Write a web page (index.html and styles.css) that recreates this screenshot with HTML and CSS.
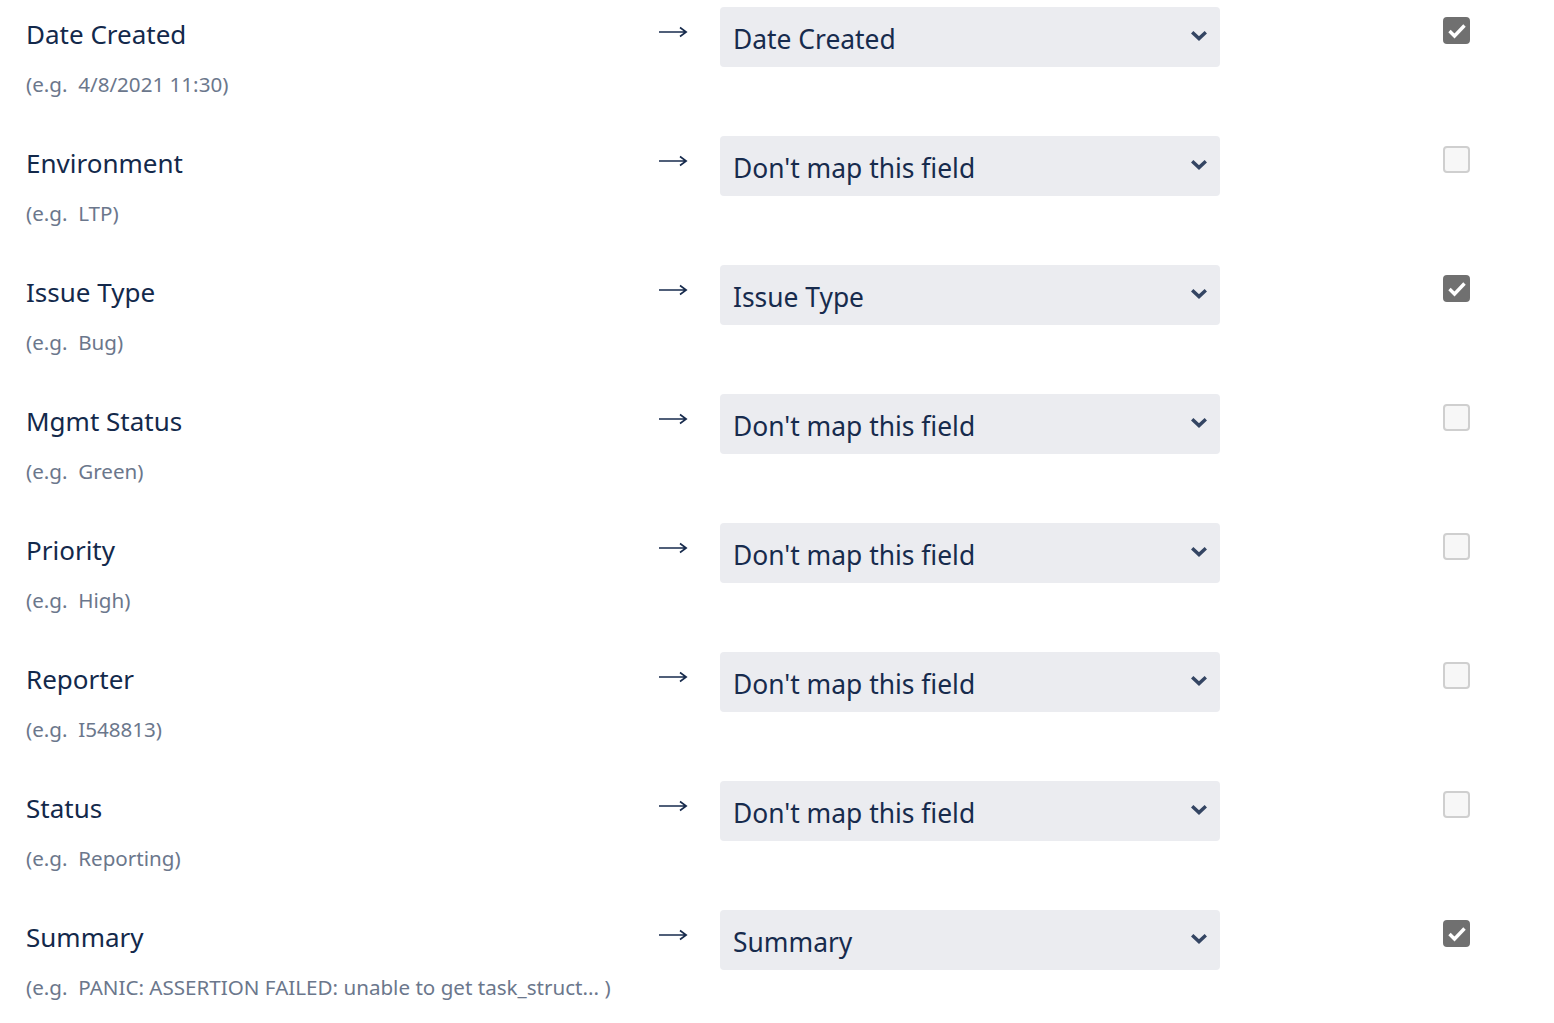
FILE: index.html
```html
<!DOCTYPE html>
<html>
<head>
<meta charset="utf-8">
<link rel="stylesheet" href="styles.css">
</head>
<body>
<div class="mapping">
  <div class="row">
    <div class="source"><div class="name">Date Created</div><div class="example">(e.g.&nbsp; 4/8/2021 11:30)</div></div>
    <div class="arrow"><svg width="30" height="14" viewBox="0 0 30 14"><path d="M1 7H28M22 2.5L28.2 7L22 11.5" fill="none" stroke="#172b4d" stroke-width="1.6"/></svg></div>
    <div class="select"><span>Date Created</span><svg class="chev" width="18" height="11" viewBox="0 0 18 11"><path d="M2.2 2.2L9 8.6L15.8 2.2" fill="none" stroke="#344563" stroke-width="3.4"/></svg></div>
    <div class="check on"><svg width="20" height="16" viewBox="0 0 20 16"><path d="M2.5 8L7.5 13L17.5 2.5" fill="none" stroke="#fff" stroke-width="3.4"/></svg></div>
  </div>
  <div class="row">
    <div class="source"><div class="name">Environment</div><div class="example">(e.g.&nbsp; LTP)</div></div>
    <div class="arrow"><svg width="30" height="14" viewBox="0 0 30 14"><path d="M1 7H28M22 2.5L28.2 7L22 11.5" fill="none" stroke="#172b4d" stroke-width="1.6"/></svg></div>
    <div class="select"><span>Don't map this field</span><svg class="chev" width="18" height="11" viewBox="0 0 18 11"><path d="M2.2 2.2L9 8.6L15.8 2.2" fill="none" stroke="#344563" stroke-width="3.4"/></svg></div>
    <div class="check"></div>
  </div>
  <div class="row">
    <div class="source"><div class="name">Issue Type</div><div class="example">(e.g.&nbsp; Bug)</div></div>
    <div class="arrow"><svg width="30" height="14" viewBox="0 0 30 14"><path d="M1 7H28M22 2.5L28.2 7L22 11.5" fill="none" stroke="#172b4d" stroke-width="1.6"/></svg></div>
    <div class="select"><span>Issue Type</span><svg class="chev" width="18" height="11" viewBox="0 0 18 11"><path d="M2.2 2.2L9 8.6L15.8 2.2" fill="none" stroke="#344563" stroke-width="3.4"/></svg></div>
    <div class="check on"><svg width="20" height="16" viewBox="0 0 20 16"><path d="M2.5 8L7.5 13L17.5 2.5" fill="none" stroke="#fff" stroke-width="3.4"/></svg></div>
  </div>
  <div class="row">
    <div class="source"><div class="name">Mgmt Status</div><div class="example">(e.g.&nbsp; Green)</div></div>
    <div class="arrow"><svg width="30" height="14" viewBox="0 0 30 14"><path d="M1 7H28M22 2.5L28.2 7L22 11.5" fill="none" stroke="#172b4d" stroke-width="1.6"/></svg></div>
    <div class="select"><span>Don't map this field</span><svg class="chev" width="18" height="11" viewBox="0 0 18 11"><path d="M2.2 2.2L9 8.6L15.8 2.2" fill="none" stroke="#344563" stroke-width="3.4"/></svg></div>
    <div class="check"></div>
  </div>
  <div class="row">
    <div class="source"><div class="name">Priority</div><div class="example">(e.g.&nbsp; High)</div></div>
    <div class="arrow"><svg width="30" height="14" viewBox="0 0 30 14"><path d="M1 7H28M22 2.5L28.2 7L22 11.5" fill="none" stroke="#172b4d" stroke-width="1.6"/></svg></div>
    <div class="select"><span>Don't map this field</span><svg class="chev" width="18" height="11" viewBox="0 0 18 11"><path d="M2.2 2.2L9 8.6L15.8 2.2" fill="none" stroke="#344563" stroke-width="3.4"/></svg></div>
    <div class="check"></div>
  </div>
  <div class="row">
    <div class="source"><div class="name">Reporter</div><div class="example">(e.g.&nbsp; I548813)</div></div>
    <div class="arrow"><svg width="30" height="14" viewBox="0 0 30 14"><path d="M1 7H28M22 2.5L28.2 7L22 11.5" fill="none" stroke="#172b4d" stroke-width="1.6"/></svg></div>
    <div class="select"><span>Don't map this field</span><svg class="chev" width="18" height="11" viewBox="0 0 18 11"><path d="M2.2 2.2L9 8.6L15.8 2.2" fill="none" stroke="#344563" stroke-width="3.4"/></svg></div>
    <div class="check"></div>
  </div>
  <div class="row">
    <div class="source"><div class="name">Status</div><div class="example">(e.g.&nbsp; Reporting)</div></div>
    <div class="arrow"><svg width="30" height="14" viewBox="0 0 30 14"><path d="M1 7H28M22 2.5L28.2 7L22 11.5" fill="none" stroke="#172b4d" stroke-width="1.6"/></svg></div>
    <div class="select"><span>Don't map this field</span><svg class="chev" width="18" height="11" viewBox="0 0 18 11"><path d="M2.2 2.2L9 8.6L15.8 2.2" fill="none" stroke="#344563" stroke-width="3.4"/></svg></div>
    <div class="check"></div>
  </div>
  <div class="row">
    <div class="source"><div class="name">Summary</div><div class="example">(e.g.&nbsp; PANIC: ASSERTION FAILED: unable to get task_struct... )</div></div>
    <div class="arrow"><svg width="30" height="14" viewBox="0 0 30 14"><path d="M1 7H28M22 2.5L28.2 7L22 11.5" fill="none" stroke="#172b4d" stroke-width="1.6"/></svg></div>
    <div class="select"><span>Summary</span><svg class="chev" width="18" height="11" viewBox="0 0 18 11"><path d="M2.2 2.2L9 8.6L15.8 2.2" fill="none" stroke="#344563" stroke-width="3.4"/></svg></div>
    <div class="check on"><svg width="20" height="16" viewBox="0 0 20 16"><path d="M2.5 8L7.5 13L17.5 2.5" fill="none" stroke="#fff" stroke-width="3.4"/></svg></div>
  </div>
</div>
</body>
</html>
```
FILE: styles.css
```css
html, body {
  margin: 0;
  padding: 0;
  background: #fff;
}
body {
  font-family: "Noto Sans", "Open Sans", sans-serif;
  color: #172b4d;
}
.mapping {
  display: flex;
  flex-direction: column;
  padding: 7px 0 0 26px;
}
.row {
  display: grid;
  grid-template-columns: 632px 62px 500px 223px 27px;
  height: 129px;
  align-items: start;
}
.row .check { grid-column: 5; }
.source {
  display: flex;
  flex-direction: column;
}
.name {
  font-size: 26px;
  line-height: 30px;
  margin-top: 12px;
  color: #13294b;
}
.example {
  font-size: 20.6px;
  line-height: 24px;
  margin-top: 23px;
  color: #6b778c;
}
.arrow {
  padding-top: 18px;
  display: flex;
}
.select {
  height: 60px;
  background: #ebecf0;
  border-radius: 4px;
  display: flex;
  align-items: center;
  justify-content: space-between;
  padding: 3px 12px 0 13px;
  box-sizing: border-box;
  font-size: 26.4px;
}
.chev { margin-top: -6px; }
.check {
  width: 27px;
  height: 27px;
  box-sizing: border-box;
  margin-top: 10px;
  border-radius: 4px;
  border: 2px solid #cfcfcf;
  background: #f7f7f7;
  display: flex;
  align-items: center;
  justify-content: center;
}
.check.on {
  background: #707070;
  border-color: #707070;
}
```
